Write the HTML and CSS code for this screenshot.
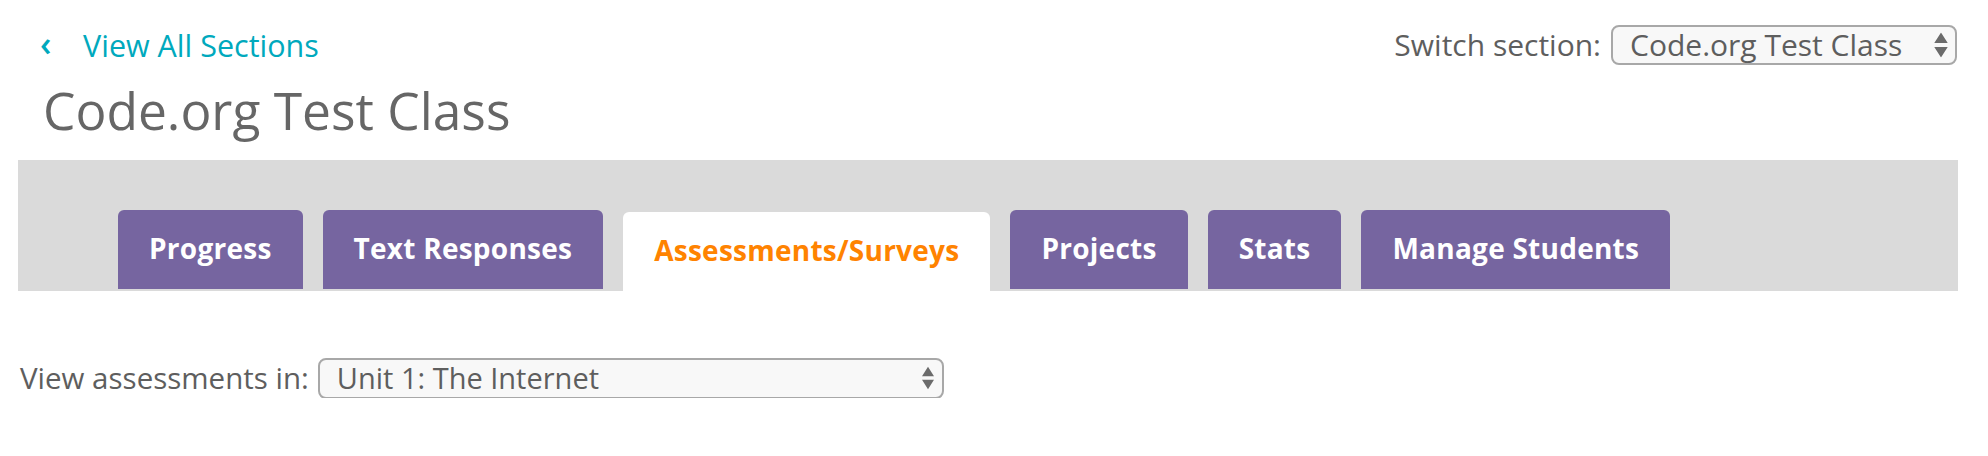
FILE: index.html
```html
<!DOCTYPE html>
<html lang="en">
<head>
<meta charset="utf-8">
<title>Code.org Test Class</title>
<link rel="stylesheet" href="styles.css">
</head>
<body>
<header class="page-head">
  <div class="topbar">
    <a class="back" href="#"><span class="chev">&#8249;</span><span class="back-text">View All Sections</span></a>
    <div class="switch">
      <label class="switch-label" for="section">Switch section:</label>
      <div class="select-wrap select-top">
        <select id="section" class="select"><option>Code.org Test Class</option></select>
        <svg class="updown" viewBox="0 0 14 26" width="14" height="25"><path d="M7 0 L14 11 L0 11 Z M0 15 L14 15 L7 26 Z" fill="#6b6b6b"/></svg>
      </div>
    </div>
  </div>
  <h1 class="title">Code.org Test Class</h1>
</header>

<nav class="band">
  <a class="tab" href="#">Progress</a>
  <a class="tab" href="#">Text Responses</a>
  <a class="tab active" href="#">Assessments/Surveys</a>
  <a class="tab" href="#">Projects</a>
  <a class="tab" href="#">Stats</a>
  <a class="tab" href="#">Manage Students</a>
</nav>

<div class="filter">
  <label class="filter-label" for="unit">View assessments in:</label>
  <div class="select-wrap select-bottom">
    <select id="unit" class="select"><option>Unit 1: The Internet</option></select>
    <svg class="updown" viewBox="0 0 14 26" width="12" height="24"><path d="M7 0 L14 11 L0 11 Z M0 15 L14 15 L7 26 Z" fill="#6b6b6b"/></svg>
  </div>
</div>
</body>
</html>
```
FILE: styles.css
```css
* { box-sizing: border-box; }

body {
  margin: 0;
  background: #ffffff;
  font-family: "Open Sans", "Noto Sans", sans-serif;
  color: #5b5b5b;
  width: 1988px;
}

.topbar {
  display: flex;
  justify-content: space-between;
  align-items: center;
  padding: 25px 31px 0 40px;
  height: 64px;
}

.back {
  display: flex;
  align-items: center;
  color: #00a9bd;
  text-decoration: none;
  font-size: 30.5px;
}

.chev {
  font-size: 34px;
  font-weight: 600;
  width: 43px;
  line-height: 1;
  margin-top: -4px;
}

.switch {
  display: flex;
  align-items: center;
  gap: 10px;
}

.switch-label {
  font-size: 30px;
  color: #5e5e5e;
}

.select-wrap {
  position: relative;
  height: 40px;
}

.select {
  appearance: none;
  -webkit-appearance: none;
  background: #f8f8f8;
  border: 2px solid #a8a8a8;
  border-radius: 8px;
  color: #5e5e5e;
  font-family: inherit;
  padding: 0 0 0 17px;
  margin: 0;
  display: block;
  line-height: 36px;
}

.select-top .select {
  width: 346px;
  height: 40px;
  font-size: 30px;
}

.select-bottom .select {
  width: 626px;
  height: 41px;
  font-size: 29px;
}

.updown {
  position: absolute;
  top: 50%;
  transform: translateY(-50%);
  pointer-events: none;
}

.select-top .updown { right: 9px; }
.select-bottom .updown { right: 10px; }

.title {
  margin: 0;
  padding: 11px 0 0 43px;
  font-weight: 400;
  font-size: 51.5px;
  line-height: 71px;
  color: #666666;
  height: 96px;
}

.band {
  display: flex;
  align-items: flex-start;
  gap: 20px;
  margin: 0 30px 0 18px;
  height: 131px;
  padding: 50px 0 0 100px;
  background: #dadada;
}

.tab {
  display: flex;
  align-items: center;
  justify-content: center;
  height: 79px;
  padding: 0 31px 4px;
  background: #7665a0;
  color: #ffffff;
  font-weight: 700;
  font-size: 28px;
  text-decoration: none;
  border-radius: 6px 6px 0 0;
  letter-spacing: 0.25px;
}

.tab.active {
  background: #ffffff;
  color: #ff8300;
  margin-top: 2px;
  height: 79px;
}

.filter {
  display: flex;
  align-items: center;
  gap: 9px;
  padding: 66px 0 0 20px;
}

.filter-label {
  font-size: 29.5px;
  color: #5e5e5e;
}
```
